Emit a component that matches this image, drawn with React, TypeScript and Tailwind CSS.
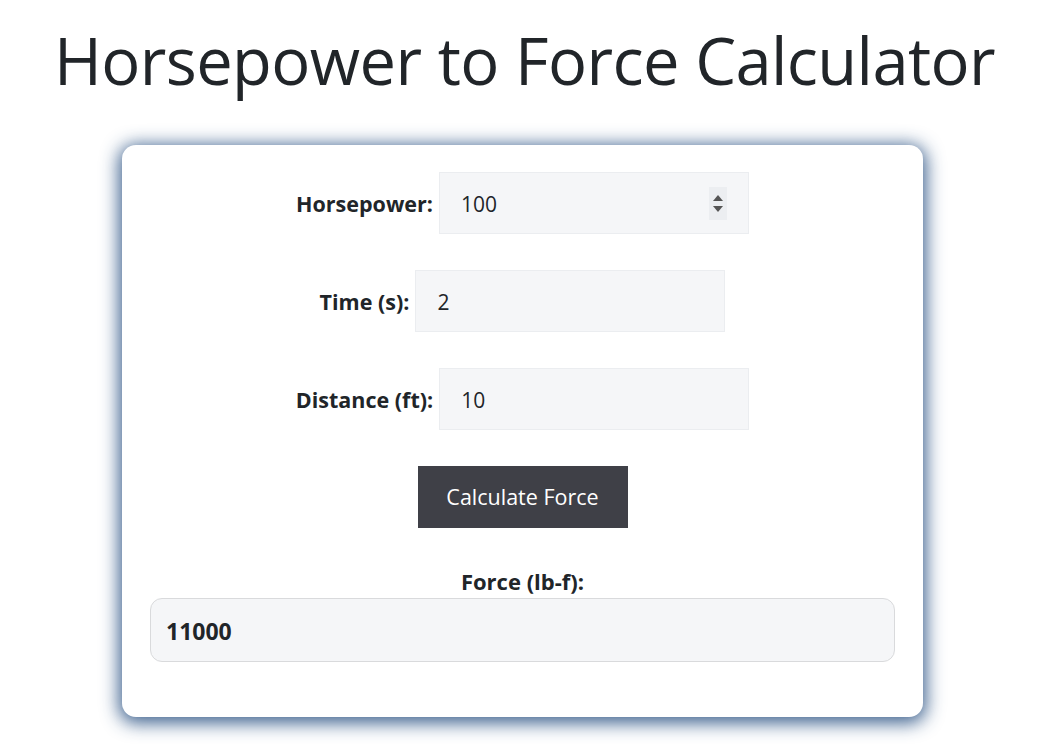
import React, { useState } from "react";

const fieldClass =
  "h-[62px] w-[310px] bg-[#f5f6f8] border border-[#ebedf0] px-[21px] pt-[3px] text-[21px] text-[#212529] outline-none";

const Row: React.FC<{ label: string; value: string; spinner?: boolean }> = ({
  label,
  value,
  spinner,
}) => (
  <div className="flex items-center justify-center gap-[6px]">
    <label className="pt-[3px] text-[21.5px] font-bold text-[#212529]">{label}</label>
    <div className={`${fieldClass} flex items-center justify-between`}>
      <span>{value}</span>
      {spinner ? (
        <span className="-mt-[3px] flex h-[33px] w-[18px] flex-col items-center justify-center gap-[5px] bg-[#eceef1]">
          <svg width="10" height="6" viewBox="0 0 10 6">
            <path d="M0 6 L5 0 L10 6 Z" fill="#555" />
          </svg>
          <svg width="10" height="6" viewBox="0 0 10 6">
            <path d="M0 0 L5 6 L10 0 Z" fill="#555" />
          </svg>
        </span>
      ) : null}
    </div>
  </div>
);

export default function App() {
  const [force] = useState("11000");

  return (
    <div
      className="min-h-[744px] bg-white pr-[13px]"
      style={{ fontFamily: '"Open Sans", "Noto Sans", sans-serif' }}
    >
      <h1 className="pt-[15px] pl-[4px] text-center text-[65px] font-normal leading-[90px] tracking-[-0.6px] text-[#212529]">
        Horsepower to Force Calculator
      </h1>
      <div className="mx-auto mt-[40px] w-[801px] rounded-[14px] bg-white px-[28px] pt-[27px] pb-[55px] shadow-[0_3px_18px_3px_rgba(40,80,130,0.9)]">
        <div className="flex flex-col gap-[36px]">
          <Row label="Horsepower:" value="100" spinner />
          <Row label="Time (s):" value="2" />
          <Row label="Distance (ft):" value="10" />
          <div className="flex justify-center">
            <button className="h-[62px] w-[210px] bg-[#3f4047] text-[21.5px] text-white">
              Calculate Force
            </button>
          </div>
        </div>
        <div className="mt-[38px] text-center text-[22px] font-bold leading-[30px] text-[#212529]">
          Force (lb-f):
        </div>
        <div className="mt-[2px] flex h-[64px] items-center rounded-[12px] border border-[#d9dadc] bg-[#f5f6f8] px-[15px] pt-[3px] text-[23px] font-bold text-[#212529]">
          {force}
        </div>
      </div>
    </div>
  );
}
